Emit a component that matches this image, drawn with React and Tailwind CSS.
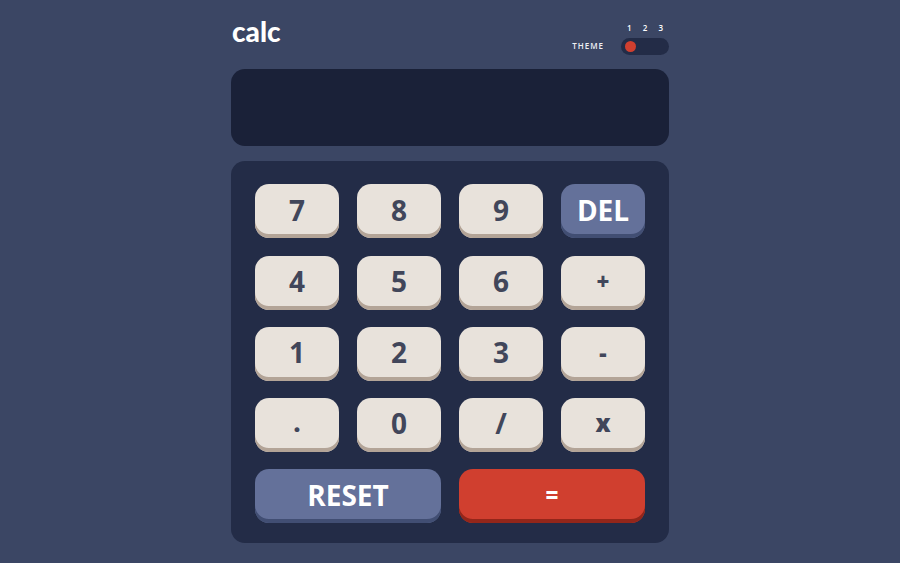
import React from 'react';

const keys = ['7', '8', '9', 'DEL', '4', '5', '6', '+', '1', '2', '3', '-', '.', '0', '/', 'x'];

const symbolSize = {
  '+': 'text-[22px] font-extrabold',
  '-': 'text-[23px] font-extrabold',
  '.': 'text-[24px] font-extrabold',
  x: 'text-[24px] font-extrabold',
  '=': 'text-[22px] font-extrabold',
};

const Key = ({ label, wide, variant = 'light' }) => {
  const styles = {
    light: 'bg-[#e8e2db] text-[#41465a] shadow-[inset_0_-4px_0_#b3a497]',
    blue: 'bg-[#64719a] text-white shadow-[inset_0_-4px_0_#414e73]',
    red: 'bg-[#d03f2f] text-white shadow-[inset_0_-4px_0_#93261a]',
  };
  return (
    <button
      className={`h-[54px] rounded-[14px] pb-[3px] flex items-center justify-center font-['Open_Sans',sans-serif] ${wide ? 'col-span-2 w-full' : ''} ${styles[variant]} ${symbolSize[label] || 'text-[28px] font-[750]'}`}
    >
      {label}
    </button>
  );
};

export default function App() {
  return (
    <div className="h-[563px] overflow-hidden bg-[#3b4664] font-['Lato',sans-serif] flex justify-center">
      <div className="w-[438px] flex flex-col">
        <header className="h-[69px] flex items-start justify-between">
          <div className="mt-[15px] pl-[1px] text-[28px] leading-[32px] font-black text-white">calc</div>
          <div className="mt-[22px] flex items-end gap-[17px] font-['Open_Sans',sans-serif]">
            <span className="mb-[4px] text-[8px] leading-[10px] font-semibold tracking-[1px] text-[#eef0f4]">THEME</span>
            <div className="flex flex-col">
              <div className="flex justify-between px-[6px] text-[8px] leading-[12px] font-semibold text-white">
                <span>1</span>
                <span>2</span>
                <span>3</span>
              </div>
              <div className="w-[48px] h-[17px] mt-[4px] rounded-full bg-[#232c47] flex items-center px-[4px]">
                <span className="w-[11px] h-[11px] rounded-full bg-[#d03f2f]" />
              </div>
            </div>
          </div>
        </header>

        <div className="h-[77px] rounded-[14px] bg-[#1a2138]" />

        <div className="mt-[15px] h-[382px] rounded-[14px] bg-[#232c47] px-6 pt-[23.4px]">
          <div className="grid grid-cols-4 gap-x-[18px] gap-y-[17.2px]">
            {keys.map((k) => (
              <Key key={k} label={k} variant={k === 'DEL' ? 'blue' : 'light'} />
            ))}
            <Key label="RESET" wide variant="blue" />
            <Key label="=" wide variant="red" />
          </div>
        </div>
      </div>
    </div>
  );
}
